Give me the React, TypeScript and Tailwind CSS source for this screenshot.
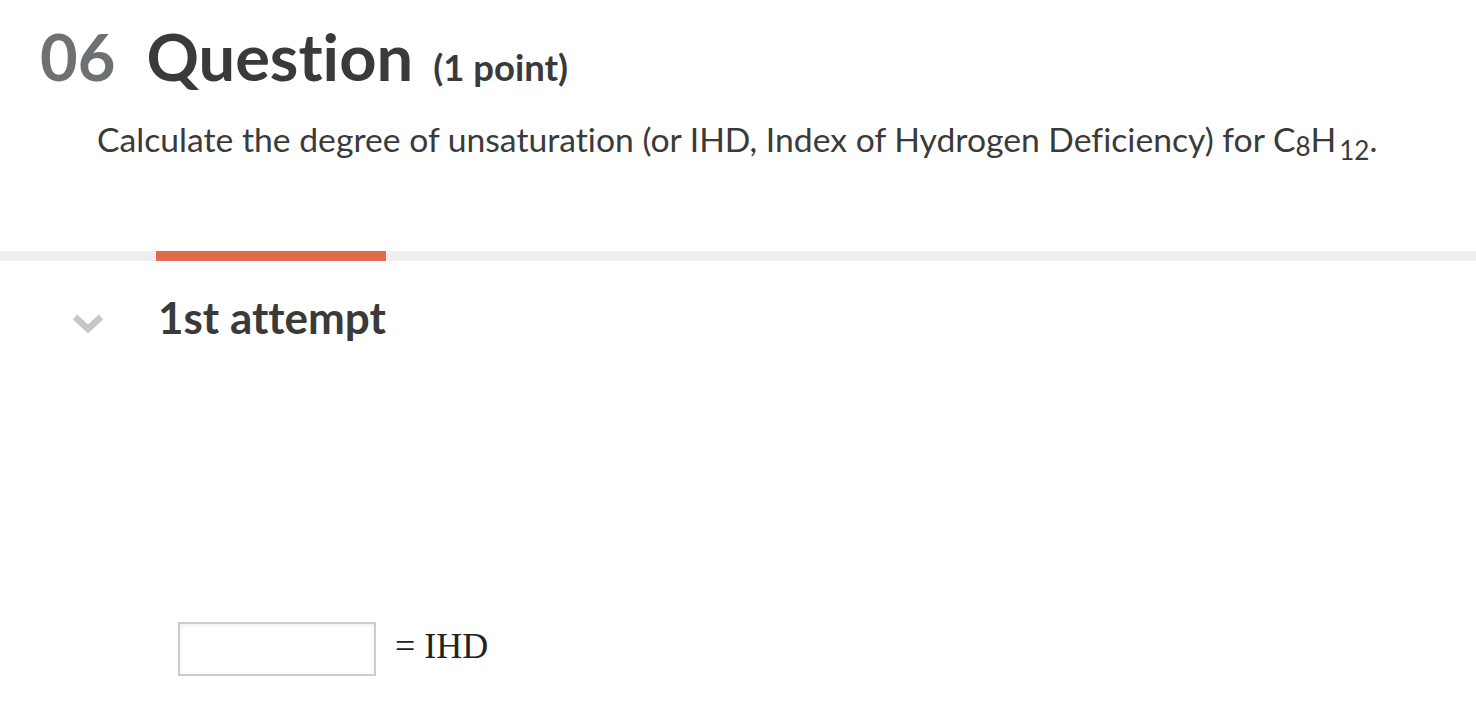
import React from 'react';

const App: React.FC = () => {
    return (
        <div className="min-h-screen bg-white text-[#3a3a3a] font-['Lato','Noto_Sans',sans-serif] [font-variant-ligatures:no-common-ligatures]">
            {/* Question header */}
            <div className="pl-[40px] pt-[24px] flex items-baseline">
                <span className="text-[65px] leading-none font-bold text-[#6e7173] mr-[31px]">06</span>
                <h1 className="text-[65px] leading-none font-bold text-[#3a3a3a] mr-[20px]">Question</h1>
                <span className="text-[36.5px] leading-none font-bold text-[#3a3a3a]">(1 point)</span>
            </div>

            {/* Prompt */}
            <p className="pl-[97px] pt-[34px] text-[33.7px] leading-none text-[#3a3a3a]">
                Calculate the degree of unsaturation (or IHD, Index of Hydrogen Deficiency) for C
                <span className="text-[26px] relative top-[4px]">8</span>H
                <span className="text-[26px] relative top-[8px] ml-[3px]">12</span>.
            </p>

            {/* Attempt tabs bar */}
            <div className="mt-[94px] h-[10px] bg-[#eeeeee] flex">
                <div className="ml-[156px] w-[230px] h-full bg-[#e06c4d]" />
            </div>

            {/* Attempt header */}
            <div className="flex items-start pt-[34px]">
                <div className="w-[158px] pl-[72px] pt-[19px]">
                    <svg width="32" height="20" viewBox="0 0 32 20" className="block">
                        <path d="M3 3 L16 15 L29 3" fill="none" stroke="#c6c6c6" strokeWidth="6.5" strokeLinecap="butt" strokeLinejoin="miter" />
                    </svg>
                </div>
                <h2 className="text-[44px] leading-none font-bold text-[#3a3a3a]">1st attempt</h2>
            </div>

            {/* Answer */}
            <div className="pl-[178px] pt-[283px] flex items-start">
                <input
                    type="text"
                    className="w-[198px] h-[54px] border-2 border-[#cccccc] bg-white shadow-[inset_0_1px_4px_rgba(0,0,0,0.08)] outline-none"
                />
                <span className="ml-[19px] mt-[6px] text-[36px] leading-none text-[#222222] font-['Liberation_Serif','Times_New_Roman',serif]">
                    = IHD
                </span>
            </div>
        </div>
    );
};

export default App;
